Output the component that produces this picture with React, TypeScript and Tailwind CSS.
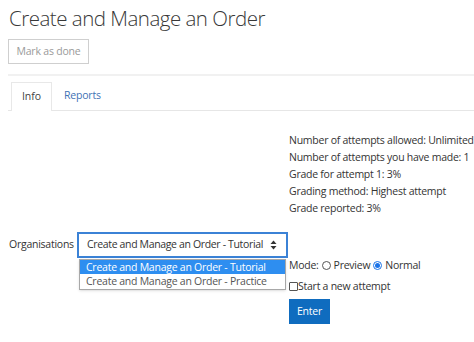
import React from "react";

const font = { fontFamily: '"Open Sans", "Noto Sans", sans-serif' };

function Arrows() {
  return (
    <svg width="7" height="10" viewBox="0 0 7 10" className="block">
      <path d="M3.5 0.5 L6.5 4 L0.5 4 Z" fill="#333" />
      <path d="M3.5 9.5 L6.5 6 L0.5 6 Z" fill="#333" />
    </svg>
  );
}

export default function App() {
  return (
    <div
      className="relative w-[474px] h-[342px] overflow-hidden bg-white text-[#333] pl-2"
      style={font}
    >
      <h1 className="pt-[3px] h-[36px] text-[20.5px] leading-[30px] font-light text-[#383838] tracking-[-0.5px] pl-[1px]">
        Create and Manage an Order
      </h1>
      <button className="mt-[3px] w-[81px] h-[25px] border border-[#cfcfcf] text-[10.5px] text-[#9a9a9a] tracking-[-0.2px] flex items-center justify-center">
        Mark as done
      </button>
      <div className="mt-[10px] h-[2px] bg-[#f1f1f1]" />
      <div className="mt-[6px] flex items-end border-b border-[#e6e6e6] h-[29px]">
        <div className="ml-[3px] w-[41px] h-[29px] border border-b-0 border-[#e8e8e8] flex items-center justify-center text-[10.5px] text-[#444] -mb-[1px] bg-white">
          Info
        </div>
        <div className="ml-[12px] h-[28px] flex items-center text-[10.5px] text-[#3f73b5] tracking-[-0.2px]">
          Reports
        </div>
      </div>
      <div className="ml-[281px] mt-[21px] text-[10.5px] leading-[17px] text-[#333] whitespace-nowrap tracking-[-0.25px]">
        <div>Number of attempts allowed: Unlimited</div>
        <div>Number of attempts you have made: 1</div>
        <div>Grade for attempt 1: 3%</div>
        <div>Grading method: Highest attempt</div>
        <div>Grade reported: 3%</div>
      </div>
      <div className="mt-[15px] flex items-center h-[26px]">
        <div className="ml-[1px] w-[68px] text-[10.5px] text-[#333] tracking-[-0.25px]">Organisations</div>
        <div className="relative w-[211px] h-[26px] border-2 border-[#3b82d6] flex items-center pl-[8px] pr-[9px] justify-between">
          <span className="text-[10.5px] text-[#333] whitespace-nowrap tracking-[-0.35px]">
            Create and Manage an Order - Tutorial
          </span>
          <Arrows />
          <div className="absolute left-[0px] top-[25px] w-[207px] border border-[#a8a8a8] bg-white shadow-sm text-[10.5px] tracking-[-0.25px] whitespace-nowrap">
            <div className="h-[14px] leading-[14px] bg-[#2e8ef0] text-white pl-[6px]">
              Create and Manage an Order - Tutorial
            </div>
            <div className="h-[15px] leading-[14px] text-[#555] pl-[6px]">
              Create and Manage an Order - Practice
            </div>
          </div>
        </div>
      </div>
      <div className="ml-[281px] text-[10.5px] text-[#333] tracking-[-0.25px] whitespace-nowrap">
        <div className="h-[15px] flex items-center">
          <span>Mode:</span>
          <span className="ml-[3px] w-[9px] h-[9px] rounded-full border border-[#555] inline-block" />
          <span className="ml-[3px]">Preview</span>
          <span className="ml-[3px] w-[9px] h-[9px] rounded-full border border-[#1a73e8] inline-flex items-center justify-center">
            <span className="w-[5px] h-[5px] rounded-full bg-[#1a73e8]" />
          </span>
          <span className="ml-[3px]">Normal</span>
        </div>
        <div className="mt-[5px] h-[17px] flex items-center">
          <span className="w-[9px] h-[9px] border border-[#555] rounded-[1px] inline-block" />
          <span>Start a new attempt</span>
        </div>
        <button className="mt-[4px] w-[41px] h-[25px] bg-[#0f6cbf] text-white text-[10.5px] flex items-center justify-center">
          Enter
        </button>
      </div>
    </div>
  );
}
